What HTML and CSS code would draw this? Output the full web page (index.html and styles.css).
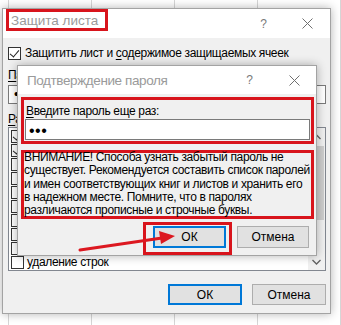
FILE: index.html
```html
<!DOCTYPE html>
<html lang="ru">
<head>
    <meta charset="UTF-8">
    <title>Защита листа</title>
    <link rel="stylesheet" href="styles.css">
</head>
<body>
    <div class="dialog outer">
        <div class="titlebar">
            <span class="title mark">Защита листа</span>
            <span class="ctl help">?</span>
            <span class="ctl close"><svg width="11" height="11" viewBox="0 0 11 11"><path d="M0.5 0.5L10.5 10.5M10.5 0.5L0.5 10.5" stroke="#6f6f6f" stroke-width="1"/></svg></span>
        </div>
        <div class="body">
            <div class="check-row">
                <span class="box checked"></span>
                <span>Защитить лист и <u>с</u>одержимое защищаемых ячеек</span>
            </div>
            <div class="label"><u>П</u>ароль для отключения защиты листа:</div>
            <div class="input">•</div>
            <div class="label label-list"><u>Р</u>азрешить всем пользователям этого листа:</div>
            <div class="list">
                <div class="items">
                    <div class="item"><span class="box checked"></span>выделение заблокированных ячеек</div>
                    <div class="item"><span class="box checked"></span>выделение незаблокированных ячеек</div>
                    <div class="item"><span class="box"></span>форматирование ячеек</div>
                    <div class="item"><span class="box"></span>форматирование столбцов</div>
                    <div class="item"><span class="box"></span>форматирование строк</div>
                    <div class="item"><span class="box"></span>вставку столбцов</div>
                    <div class="item"><span class="box"></span>вставку строк</div>
                    <div class="item"><span class="box"></span>вставку гиперссылок</div>
                    <div class="item"><span class="box"></span>удаление столбцов</div>
                    <div class="item"><span class="box"></span>удаление строк</div>
                </div>
                <div class="scrollbar">
                    <span class="arrow-btn"><svg width="9" height="6" viewBox="0 0 9 6"><path d="M0.5 5L4.5 1L8.5 5" fill="none" stroke="#606060" stroke-width="1.3"/></svg></span>
                    <span class="thumb"></span>
                    <span class="arrow-btn"><svg width="9" height="6" viewBox="0 0 9 6"><path d="M0.5 1L4.5 5L8.5 1" fill="none" stroke="#606060" stroke-width="1.3"/></svg></span>
                </div>
            </div>
            <div class="buttons">
                <button class="btn default">ОК</button>
                <button class="btn">Отмена</button>
            </div>
        </div>
    </div>

    <div class="dialog inner">
        <div class="titlebar">
            <span class="title">Подтверждение пароля</span>
            <span class="ctl help">?</span>
            <span class="ctl close"><svg width="11" height="11" viewBox="0 0 11 11"><path d="M0.5 0.5L10.5 10.5M10.5 0.5L0.5 10.5" stroke="#6f6f6f" stroke-width="1"/></svg></span>
        </div>
        <div class="body">
            <div class="mark group">
                <div class="label"><u>В</u>ведите пароль еще раз:</div>
                <div class="input dots">•••</div>
            </div>
            <div class="mark warning">
                <p>ВНИМАНИЕ! Способа узнать забытый пароль не<br>
                существует. Рекомендуется составить список паролей<br>
                и имен соответствующих книг и листов и хранить его<br>
                в надежном месте. Помните, что в паролях<br>
                различаются прописные и строчные буквы.</p>
            </div>
            <div class="buttons">
                <span class="mark ok-mark"><button class="btn default">ОК</button></span>
                <button class="btn cancel">Отмена</button>
            </div>
        </div>
    </div>

    <svg class="pointer" width="341" height="325" viewBox="0 0 341 325">
        <line x1="80" y1="250" x2="162" y2="238" stroke="#dc1820" stroke-width="3" stroke-linecap="round"/>
        <polygon points="175,236 159,231 161,244" fill="#dc1820"/>
    </svg>
</body>
</html>
```

FILE: styles.css
```css
* {
    box-sizing: border-box;
}

body {
    margin: 0;
    width: 341px;
    height: 325px;
    overflow: hidden;
    position: relative;
    font-family: "Liberation Sans", Arial, sans-serif;
    font-size: 12px;
    letter-spacing: -0.35px;
    color: #000;
    background-color: #fff;
    background-image: linear-gradient(to right, #d6d6d6 1px, transparent 1px);
    background-size: 83px 100%;
    background-position: 8px 0;
}

u {
    text-decoration-thickness: 1px;
    text-underline-offset: 2px;
}

.dialog {
    position: absolute;
    display: flex;
    flex-direction: column;
    background: #f0f0f0;
    border: 1px solid #a3a3a3;
    box-shadow: 0 0 9px rgba(0, 0, 0, 0.3);
}

.outer {
    left: 2px;
    top: 8px;
    width: 329px;
    height: 306px;
}

.inner {
    left: 17px;
    top: 65px;
    width: 300px;
    height: 191px;
}

.titlebar {
    display: flex;
    align-items: center;
    background: #fff;
    flex-shrink: 0;
}

.outer .titlebar {
    height: 29px;
    padding-left: 3px;
}

.inner .titlebar {
    height: 28px;
    padding-left: 9px;
}

.title {
    color: #9a9a9a;
    font-size: 13.5px;
    letter-spacing: 0;
    white-space: nowrap;
    margin-right: auto;
}

.inner .title {
    letter-spacing: -0.4px;
}

.mark {
    border: 3px solid #d8141c;
}

.outer .title {
    align-self: flex-start;
    width: 102px;
    height: 22px;
    padding-left: 2px;
    line-height: 17px;
}

.ctl {
    display: flex;
    align-items: center;
    justify-content: center;
    color: #7a7a7a;
    font-size: 12px;
    height: 100%;
}

.help {
    width: 45px;
}

.outer .close {
    width: 43px;
    margin-right: 1px;
}

.inner .close {
    width: 44px;
}

.outer .body {
    padding: 6px 4px 0 5px;
}

.check-row {
    display: flex;
    align-items: center;
    gap: 4px;
    height: 18px;
    white-space: nowrap;
}

.box {
    display: inline-block;
    width: 13px;
    height: 13px;
    border: 1px solid #333;
    background: #fff;
    position: relative;
    flex-shrink: 0;
}

.box.checked::after {
    content: "";
    position: absolute;
    left: 3px;
    top: 0px;
    width: 4px;
    height: 8px;
    border: solid #222;
    border-width: 0 1.5px 1.5px 0;
    transform: rotate(40deg);
}

.label {
    height: 16px;
    line-height: 16px;
    margin-top: 5px;
    white-space: nowrap;
}

.label-list {
    margin-top: 7px;
}

.input {
    height: 19px;
    margin-top: 2px;
    border: 1px solid #7a7a7a;
    background: #fff;
    padding-left: 5px;
    line-height: 17px;
    font-size: 14px;
}

.list {
    display: flex;
    height: 144px;
    border: 1px solid #828790;
    background: #fff;
}

.items {
    flex: 1;
    padding: 1px 0 0 2px;
    overflow: hidden;
}

.item {
    display: flex;
    align-items: center;
    gap: 3px;
    height: 14px;
    white-space: nowrap;
}

.scrollbar {
    width: 17px;
    display: flex;
    flex-direction: column;
    background: #f0f0f0;
}

.arrow-btn {
    height: 17px;
    display: flex;
    align-items: center;
    justify-content: center;
}

.thumb {
    height: 74px;
    margin: 1px 1px 0;
    background: #cdcdcd;
}

.scrollbar .arrow-btn:last-child {
    margin-top: auto;
}

.buttons {
    display: flex;
    justify-content: flex-end;
    align-items: flex-start;
}

.outer .buttons {
    margin-top: 13px;
    gap: 10px;
}

.btn {
    width: 74px;
    height: 21px;
    padding: 0;
    font-family: inherit;
    font-size: 12px;
    color: #000;
    background: #e1e1e1;
    border: 1px solid #adadad;
}

.btn.default {
    border: 2px solid #0078d7;
}

.inner .body {
    padding: 3px 2px 0 3px;
}

.group {
    height: 47px;
}

.group .label {
    height: 19px;
    margin-top: 0;
    padding: 3px 0 0 2px;
}

.dots {
    height: 21px;
    margin: 0 1px;
    padding-left: 3px;
    line-height: 21px;
    font-size: 16px;
    letter-spacing: 0.5px;
}

.warning {
    margin-top: 6px;
    height: 69px;
    white-space: nowrap;
}

.warning p {
    margin: -2px 0 0 0;
    line-height: 13.25px;
}

.inner .buttons {
    margin-top: 3px;
    margin-right: 5px;
}

.ok-mark {
    display: flex;
    padding: 1px 3px 4px 7px;
}

.inner .btn {
    height: 22px;
}

.ok-mark .btn {
    width: 73px;
}

.cancel {
    width: 72px;
    margin-left: 5px;
    margin-top: 4px;
}

.pointer {
    position: absolute;
    left: 0;
    top: 0;
    pointer-events: none;
}
```
